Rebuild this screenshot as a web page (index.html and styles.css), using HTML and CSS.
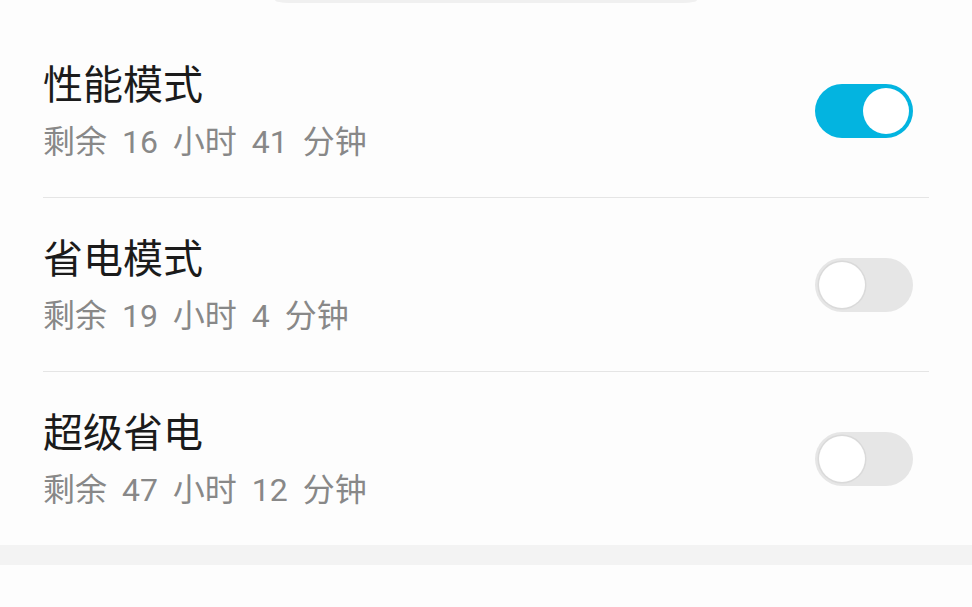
FILE: index.html
```html
<!DOCTYPE html>
<html lang="zh">
<head>
<meta charset="utf-8">
<link rel="stylesheet" href="styles.css">
</head>
<body>
<div class="top-pill"></div>
<ul class="modes">
  <li class="mode">
    <div class="mode-text">
      <div class="mode-title">性能模式</div>
      <div class="mode-sub">剩余 16 小时 41 分钟</div>
    </div>
    <span class="switch switch-on"><span class="knob"></span></span>
  </li>
  <li class="mode">
    <div class="mode-text">
      <div class="mode-title">省电模式</div>
      <div class="mode-sub">剩余 19 小时 4 分钟</div>
    </div>
    <span class="switch"><span class="knob"></span></span>
  </li>
  <li class="mode">
    <div class="mode-text">
      <div class="mode-title">超级省电</div>
      <div class="mode-sub">剩余 47 小时 12 分钟</div>
    </div>
    <span class="switch"><span class="knob"></span></span>
  </li>
</ul>
<div class="band"></div>
</body>
</html>
```
FILE: styles.css
```css
html, body {
  margin: 0;
  padding: 0;
  background: #fdfdfd;
}
body {
  font-family: Roboto, "Noto Sans CJK SC", sans-serif;
  width: 972px;
  height: 607px;
  overflow: hidden;
}
.top-pill {
  width: 422px;
  height: 3px;
  margin: 0 0 0 275px;
  background: #f0f0f0;
  border-radius: 0 0 14px 14px / 0 0 3px 3px;
}
.modes {
  list-style: none;
  margin: 0;
  padding: 21px 43px 0 43px;
}
.mode {
  height: 173px;
  display: flex;
  align-items: center;
  justify-content: space-between;
  border-bottom: 1px solid #e5e5e5;
  padding-right: 16px;
}
.mode:last-child {
  border-bottom: none;
}
.mode-text {
  display: flex;
  flex-direction: column;
  gap: 11px;
  padding-top: 4px;
}
.mode-title {
  font-size: 40px;
  line-height: 48px;
  color: #1b1b1b;
}
.mode-sub {
  font-size: 32px;
  line-height: 42px;
  word-spacing: 7px;
  color: #888888;
}
.switch {
  width: 98px;
  height: 54px;
  border-radius: 27px;
  background: #e6e6e6;
  display: flex;
  align-items: center;
  padding: 0 4px;
  box-sizing: border-box;
}
.knob {
  width: 46px;
  height: 46px;
  border-radius: 50%;
  background: #fff;
  box-shadow: 0 0 0 1.5px #dadada;
}
.switch-on {
  background: #03b4e0;
  justify-content: flex-end;
}
.switch-on .knob {
  box-shadow: none;
}
.band {
  height: 20px;
  background: #f3f3f3;
}
```
